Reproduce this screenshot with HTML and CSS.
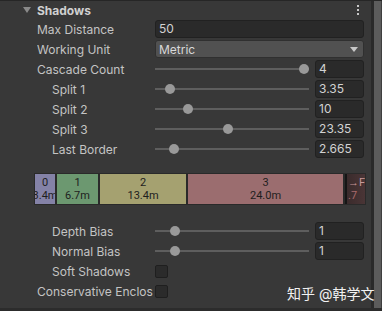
FILE: index.html
```html
<!DOCTYPE html>
<html lang="en">
<head>
    <meta charset="UTF-8">
    <title>Shadows</title>
    <link rel="stylesheet" href="styles.css">
</head>
<body>
    <div class="window">
        <div class="inspector">
            <div class="header">
                <span class="fold"></span>
                <span class="title">Shadows</span>
                <span class="kebab"><i></i><i></i><i></i></span>
            </div>

            <div class="row">
                <label>Max Distance</label>
                <div class="field wide">50</div>
            </div>
            <div class="row">
                <label>Working Unit</label>
                <div class="dropdown">Metric<span class="arrow"></span></div>
            </div>
            <div class="row">
                <label>Cascade Count</label>
                <div class="slider"><div class="track"><span class="thumb" style="left: 97%"></span></div></div>
                <div class="field">4</div>
            </div>
            <div class="row sub">
                <label>Split 1</label>
                <div class="slider"><div class="track"><span class="thumb" style="left: 9.5%"></span></div></div>
                <div class="field">3.35</div>
            </div>
            <div class="row sub">
                <label>Split 2</label>
                <div class="slider"><div class="track"><span class="thumb" style="left: 21.5%"></span></div></div>
                <div class="field">10</div>
            </div>
            <div class="row sub">
                <label>Split 3</label>
                <div class="slider"><div class="track"><span class="thumb" style="left: 47.5%"></span></div></div>
                <div class="field">23.35</div>
            </div>
            <div class="row sub">
                <label>Last Border</label>
                <div class="slider"><div class="track"><span class="thumb" style="left: 12.5%"></span></div></div>
                <div class="field">2.665</div>
            </div>

            <div class="cascades">
                <div class="cascade c0" style="width: 20px"><span>0</span><span>3.4m</span></div>
                <div class="cascade c1" style="width: 41px"><span>1</span><span>6.7m</span></div>
                <div class="cascade c2" style="width: 86px"><span>2</span><span>13.4m</span></div>
                <div class="cascade c3" style="width: 155px"><span>3</span><span>24.0m</span></div>
                <div class="cascade fade"><span class="to">&rarr;F</span><span>.7</span></div>
            </div>

            <div class="row sub">
                <label>Depth Bias</label>
                <div class="slider"><div class="track"><span class="thumb" style="left: 13%"></span></div></div>
                <div class="field">1</div>
            </div>
            <div class="row sub">
                <label>Normal Bias</label>
                <div class="slider"><div class="track"><span class="thumb" style="left: 13%"></span></div></div>
                <div class="field">1</div>
            </div>
            <div class="row sub">
                <label>Soft Shadows</label>
                <span class="check"></span>
            </div>
            <div class="row">
                <label>Conservative Enclos</label>
                <span class="check"></span>
            </div>

            <div class="watermark">知乎 @韩学文</div>
        </div>
        <div class="scrollbar"><span class="edge"></span><span class="thumbbar"></span></div>
    </div>
</body>
</html>
```

FILE: styles.css
```css
* {
    margin: 0;
    padding: 0;
    box-sizing: border-box;
}

body {
    background-color: #383838;
    font-family: Inter, "Noto Sans CJK SC", sans-serif;
    font-size: 12px;
    color: #c4c4c4;
    width: 382px;
    height: 311px;
    overflow: hidden;
}

.window {
    display: flex;
    height: 311px;
    border-top: 1px solid #262626;
    border-bottom: 3px solid #2c2c2c;
}

.inspector {
    position: relative;
    flex: 1;
}

.header {
    display: flex;
    align-items: center;
    height: 18px;
    padding-left: 23px;
    padding-right: 12px;
}

.fold {
    width: 0;
    height: 0;
    border-left: 4px solid transparent;
    border-right: 4px solid transparent;
    border-top: 6px solid #8a8a8a;
    margin-right: 6px;
}

.title {
    font-weight: bold;
    color: #d0d0d0;
    flex: 1;
}

.kebab {
    display: flex;
    flex-direction: column;
    gap: 2px;
}

.kebab i {
    width: 2px;
    height: 2px;
    background-color: #c8c8c8;
}

.row {
    display: flex;
    align-items: center;
    height: 20px;
    padding-left: 37px;
    padding-right: 7px;
}

.row.sub {
    padding-left: 52px;
}

.row label {
    width: 118px;
    white-space: nowrap;
    overflow: hidden;
}

.row.sub label {
    width: 103px;
}

.field {
    width: 49px;
    height: 18px;
    background-color: #2a2a2a;
    border: 1px solid #212121;
    border-radius: 3px;
    padding-left: 3px;
    line-height: 16px;
    color: #d2d2d2;
    margin-left: 6px;
}

.field.wide {
    flex: 1;
    margin-left: 0;
}

.dropdown {
    flex: 1;
    height: 18px;
    display: flex;
    align-items: center;
    justify-content: space-between;
    background-color: #515151;
    border: 1px solid #303030;
    border-radius: 3px;
    padding: 0 5px 0 3px;
    color: #d8d8d8;
}

.arrow {
    width: 0;
    height: 0;
    border-left: 4px solid transparent;
    border-right: 4px solid transparent;
    border-top: 5px solid #c8c8c8;
}

.slider {
    flex: 1;
    display: flex;
    align-items: center;
    height: 18px;
}

.track {
    position: relative;
    width: 100%;
    height: 2px;
    background-color: #5e5e5e;
}

.thumb {
    position: absolute;
    top: -4px;
    width: 10px;
    height: 10px;
    margin-left: -5px;
    border-radius: 50%;
    background-color: #999999;
}

.cascades {
    display: flex;
    height: 32px;
    margin: 14px 5px 16px 34px;
    background-color: #2a2a2a;
    padding: 1px;
    gap: 2px;
}

.cascade {
    display: flex;
    flex-direction: column;
    align-items: center;
    justify-content: center;
    overflow: hidden;
    font-family: Roboto, sans-serif;
    font-size: 11px;
    line-height: 13px;
    color: #1e1e1e;
    white-space: nowrap;
}

.c0 { background-color: #8482a7; }
.c1 { background-color: #6c9870; }
.c2 { background-color: #a5a170; }
.c3 { background-color: #9b6d6f; }

.fade {
    flex: 1;
    align-items: flex-start;
    padding-left: 1px;
    color: #a86a6c;
    background: linear-gradient(to right, #3a2b2c, #4a3536);
    border-left: 2px solid #151515;
}

.fade .to {
    color: #c89a9a;
}

.check {
    width: 13px;
    height: 13px;
    background-color: #2b2b2b;
    border: 1px solid #1f1f1f;
    border-radius: 2px;
}

.watermark {
    position: absolute;
    left: 287px;
    top: 282px;
    font-size: 14px;
    color: #f2f2f2;
    white-space: nowrap;
}

.scrollbar {
    display: flex;
    width: 15px;
    background-color: #3e3e3e;
}

.edge {
    width: 3px;
    background-color: #2a2a2a;
}

.thumbbar {
    width: 7px;
    background-color: #5c5c5c;
}
```
